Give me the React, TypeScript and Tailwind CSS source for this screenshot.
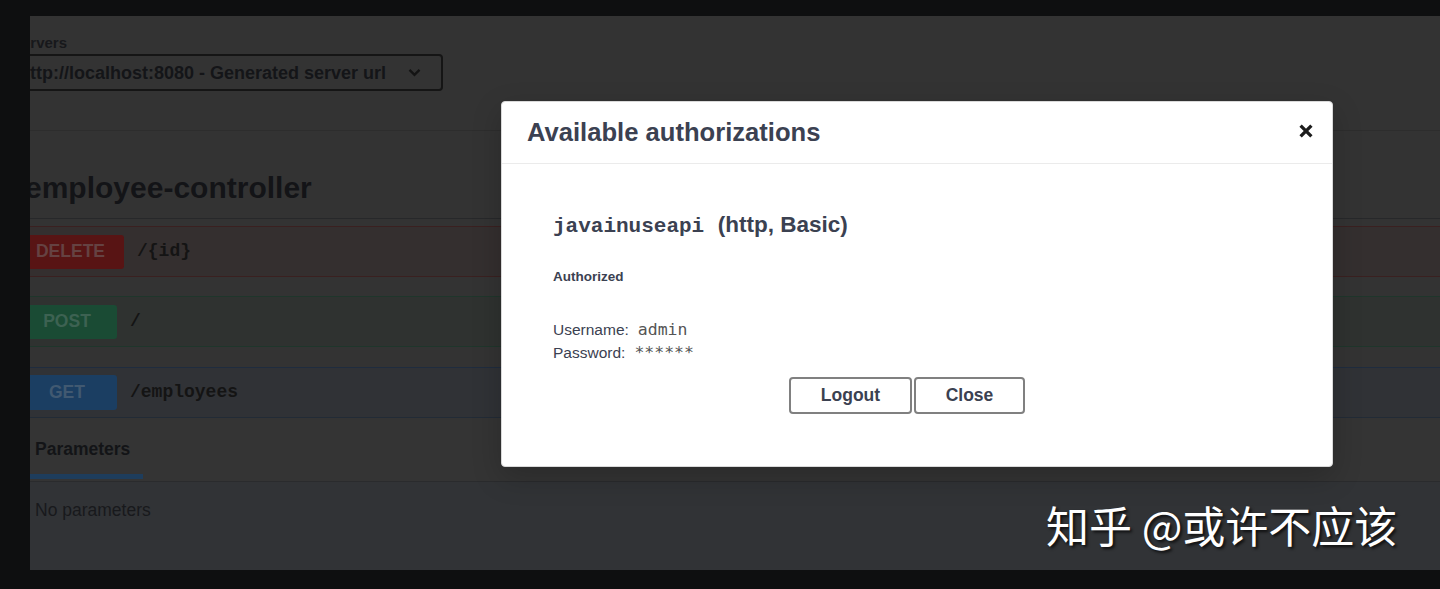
import React from "react";

function Chevron() {
  return (
    <svg width="13" height="9" viewBox="0 0 13 9" fill="none">
      <path d="M1.5 1.8 L6.5 6.8 L11.5 1.8" stroke="#141414" strokeWidth="2.4" />
    </svg>
  );
}

function CloseX() {
  return (
    <svg width="14" height="14" viewBox="0 0 14 14" fill="none">
      <path d="M1.6 1.6 L12.4 12.4 M12.4 1.6 L1.6 12.4" stroke="#1c1c1c" strokeWidth="3.3" />
    </svg>
  );
}

export default function App() {
  return (
    <div className="w-[1440px] h-[589px] overflow-hidden bg-[#0e0f10] pt-[16px] pl-[30px] font-['Liberation_Sans',Arial,sans-serif]">
      <div className="relative h-[554px] w-[1410px] overflow-hidden bg-[#333333]">
        {/* dimmed swagger page */}
        <div className="flex flex-col">
          {/* servers */}
          <div className="h-[115px] border-b border-[#2d2d2d] pt-[18px]">
            <div className="-ml-[26px] flex flex-col">
              <div className="ml-[8px] text-[15px] leading-[17px] font-bold text-[#17181b]">Servers</div>
              <div className="mt-[3px] flex h-[37px] w-[439px] items-center justify-between rounded-[4px] border-2 border-[#151515] pl-[13px] pr-[20px]">
                <span className="whitespace-nowrap text-[18px] font-bold leading-none text-[#141518]">
                  http://localhost:8080 - Generated server url
                </span>
                <Chevron />
              </div>
            </div>
          </div>

          {/* tag heading */}
          <div className="-ml-[20px] w-[1440px] border-b border-[#27282a] pt-[39px] pb-[12px] pl-[15px]">
            <div className="text-[30px] font-bold leading-[36px] text-[#131417]">employee-controller</div>
          </div>

          <div className="-ml-[20px] mt-[7px] w-[1440px] flex flex-col">
            {/* DELETE */}
            <div className="flex h-[51px] items-center border border-[#3a2020] bg-[#342f2f] pl-[6px]">
              <div className="flex h-[34px] w-[107px] items-center justify-center rounded-[3px] bg-[#581414] text-[17.5px] font-bold text-[#654242]">
                DELETE
              </div>
              <span className="ml-[13px] font-['Liberation_Mono',monospace] text-[18px] font-bold text-[#141414]">/{"{id}"}</span>
            </div>

            {/* POST */}
            <div className="mt-[19px] flex h-[51px] items-center border border-[#1f362b] bg-[#2f3230] pl-[6px]">
              <div className="flex h-[34px] w-[100px] items-center justify-center rounded-[3px] bg-[#1a4b34] text-[17.5px] font-bold text-[#3d6252]">
                POST
              </div>
              <span className="ml-[13px] font-['Liberation_Mono',monospace] text-[18px] font-bold text-[#141414]">/</span>
            </div>

            {/* GET (open) */}
            <div className="mt-[20px] flex flex-col border border-[#1f2c3e] bg-[#313336]">
              <div className="flex h-[50px] items-center border-b border-[#222b36] bg-[#303236] pl-[6px]">
                <div className="flex h-[35px] w-[100px] items-center justify-center rounded-[3px] bg-[#1b3e62] text-[17.5px] font-bold text-[#415971]">
                  GET
                </div>
                <span className="ml-[13px] font-['Liberation_Mono',monospace] text-[18px] font-bold text-[#141414]">/employees</span>
              </div>
              <div className="flex h-[64px] flex-col border-b border-[#2a2b2d] bg-[#343434] pl-[24px] pt-[21px]">
                <div className="text-[17.5px] font-bold leading-[20px] text-[#131417]">Parameters</div>
                <div className="-ml-[10px] mt-[15px] h-[5px] w-[118px] bg-[#1e3d5c]"></div>
              </div>
              <div className="h-[120px] pl-[24px] pt-[18px]">
                <div className="text-[17.5px] leading-[20px] text-[#18191c]">No parameters</div>
              </div>
            </div>
          </div>
        </div>

        {/* modal */}
        <div className="absolute left-[471px] top-[85px] flex h-[366px] w-[832px] flex-col rounded-[4px] border border-[#d9d9d9] bg-white shadow-[0_10px_30px_rgba(0,0,0,0.2)]">
          <div className="flex h-[62px] items-center justify-between border-b border-[#ebebeb] pl-[25px] pr-[19px]">
            <div className="text-[25.6px] font-bold leading-[25px] text-[#3b4151]">Available authorizations</div>
            <div className="-mt-[4px]">
              <CloseX />
            </div>
          </div>
          <div className="flex flex-col pl-[51px] pt-[47px]">
            <div className="flex items-baseline whitespace-pre text-[22.5px] font-bold leading-[28px] text-[#3b4151]">
              <span className="font-['Liberation_Mono',monospace] text-[21px] font-bold">javainuseapi</span>
              <span className="ml-[1px]">{"  (http, Basic)"}</span>
            </div>
            <div className="mt-[28px] text-[13.5px] font-bold leading-[16px] text-[#3b4151]">Authorized</div>
            <div className="mt-[33px] flex items-baseline leading-[23px]">
              <span className="text-[15.5px] text-[#3b4151]">Username:</span>
              <span className="ml-[9px] font-['DejaVu_Sans_Mono',monospace] text-[16.5px] text-[#555555]">admin</span>
            </div>
            <div className="flex items-baseline leading-[23px]">
              <span className="text-[15.5px] text-[#3b4151]">Password:</span>
              <span className="ml-[9px] font-['DejaVu_Sans_Mono',monospace] text-[16.5px] text-[#555555]">******</span>
            </div>
          </div>
          <div className="mt-[13px] flex justify-center gap-[2px] pr-[20px]">
            <button className="flex h-[37px] w-[123px] items-center justify-center rounded-[4px] border-2 border-[#808080] bg-white text-[17.5px] font-bold text-[#3b4151]">
              Logout
            </button>
            <button className="flex h-[37px] w-[111px] items-center justify-center rounded-[4px] border-2 border-[#808080] bg-white text-[17.5px] font-bold text-[#3b4151]">
              Close
            </button>
          </div>
        </div>

        {/* watermark */}
        <div className="absolute left-[1016px] top-[487px] whitespace-nowrap font-['Noto_Sans_CJK_SC',sans-serif] text-[43px] font-normal leading-[43px] text-white [text-shadow:2px_2px_3px_rgba(0,0,0,0.75)]">
          知乎 @或许不应该
        </div>
      </div>
    </div>
  );
}
